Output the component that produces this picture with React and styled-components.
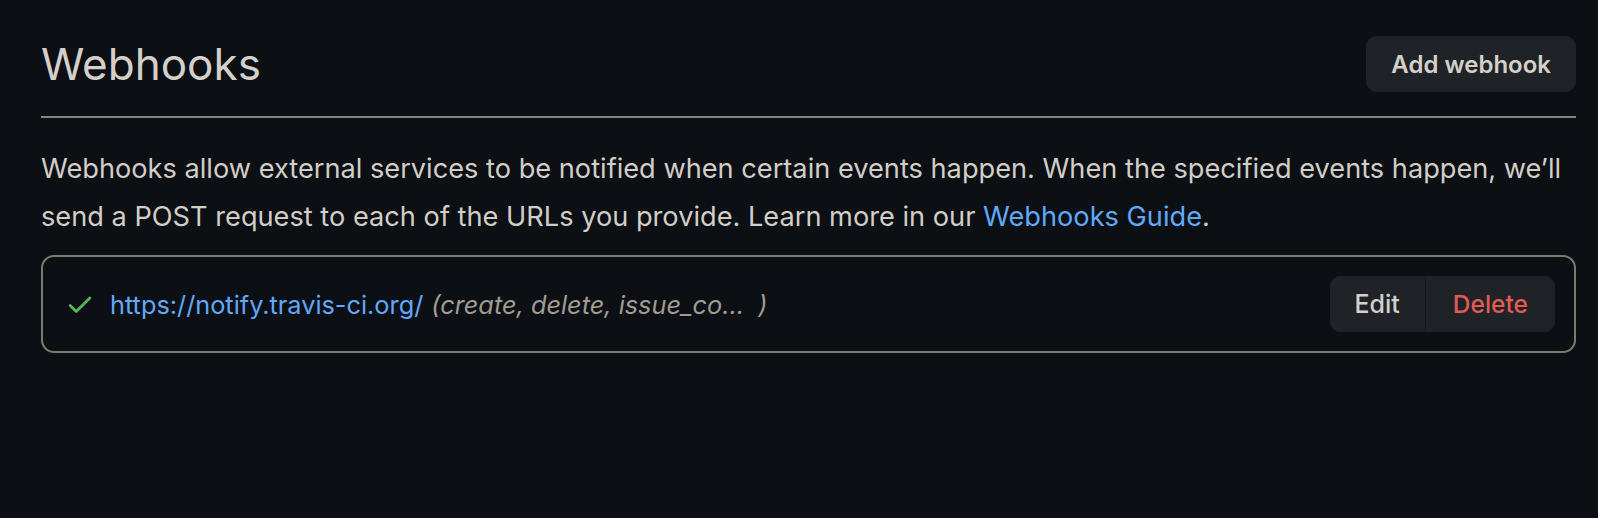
import React from "react";
import styled, { createGlobalStyle } from "styled-components";

const GlobalStyle = createGlobalStyle`
  html, body {
    margin: 0;
    padding: 0;
    background: #0c0f14;
  }
  body {
    font-family: Inter, "Noto Sans", "Liberation Sans", sans-serif;
    color: #d2cec7;
  }
`;

const Page = styled.div`
  width: 1598px;
  min-height: 518px;
  box-sizing: border-box;
  padding: 36px 22px 0 41px;
  background: #0c0f14;
`;

const Subhead = styled.div`
  display: flex;
  align-items: center;
  justify-content: space-between;
  padding-bottom: 24px;
  border-bottom: 2px solid #8a8478;
`;

const Heading = styled.h2`
  margin: 0;
  font-size: 44px;
  font-weight: 400;
  line-height: 56px;
  color: #d4d0c9;
`;

const Button = styled.button`
  height: 56px;
  padding: 0 25px;
  border: none;
  border-radius: 11px;
  background: #1f2227;
  color: ${(p) => (p.$danger ? "#e25c54" : "#d4d0c9")};
  font-family: inherit;
  font-size: 24px;
  font-weight: 600;
  cursor: pointer;
`;

const Description = styled.p`
  margin: 27px 0 14px;
  font-size: 27.2px;
  line-height: 48px;
  color: #d2cec7;
`;

const Link = styled.a`
  color: #60a9f8;
  text-decoration: none;
`;

const Card = styled.div`
  display: flex;
  align-items: center;
  gap: 15px;
  padding: 19px 19px 19px 22px;
  border: 2px solid #7f796d;
  border-radius: 13px;
`;

const CheckIcon = styled.svg`
  width: 30px;
  height: 30px;
  flex: none;
  fill: #57b45b;
`;

const Hook = styled.div`
  flex: 1;
  min-width: 0;
  font-size: 25.3px;
  white-space: nowrap;
`;

const Events = styled.span`
  font-style: italic;
  color: #a19c92;
  margin-left: 8px;
`;

const Group = styled.div`
  display: flex;
  border-radius: 11px;
  overflow: hidden;
  background: #1f2227;
`;

const GroupButton = styled(Button)`
  border-radius: 0;
  padding: 0 ${(p) => (p.$danger ? "27px" : "25px")};
  font-size: ${(p) => (p.$danger ? "24.5px" : "25px")};
  font-weight: 500;
  & + & {
    border-left: 1px solid #15181c;
  }
`;

export default function App() {
  return (
    <>
      <GlobalStyle />
      <Page>
        <Subhead>
          <Heading>Webhooks</Heading>
          <Button>Add webhook</Button>
        </Subhead>
        <Description>
          Webhooks allow external services to be notified when certain events
          happen. When the specified events happen, we’ll send a POST request
          to each of the URLs you provide. Learn more in our{" "}
          <Link href="#">Webhooks Guide</Link>.
        </Description>
        <Card>
          <CheckIcon viewBox="0 0 16 16" aria-hidden="true">
            <path d="M13.78 4.22a.75.75 0 0 1 0 1.06l-7.25 7.25a.75.75 0 0 1-1.06 0L2.22 9.28a.751.751 0 0 1 .018-1.042.751.751 0 0 1 1.042-.018L6 10.94l6.72-6.72a.75.75 0 0 1 1.06 0Z" />
          </CheckIcon>
          <Hook>
            <Link href="#">https://notify.travis-ci.org/</Link>
            <Events>(create, delete, issue_co…&nbsp;&nbsp;)</Events>
          </Hook>
          <Group>
            <GroupButton>Edit</GroupButton>
            <GroupButton $danger>Delete</GroupButton>
          </Group>
        </Card>
      </Page>
    </>
  );
}
